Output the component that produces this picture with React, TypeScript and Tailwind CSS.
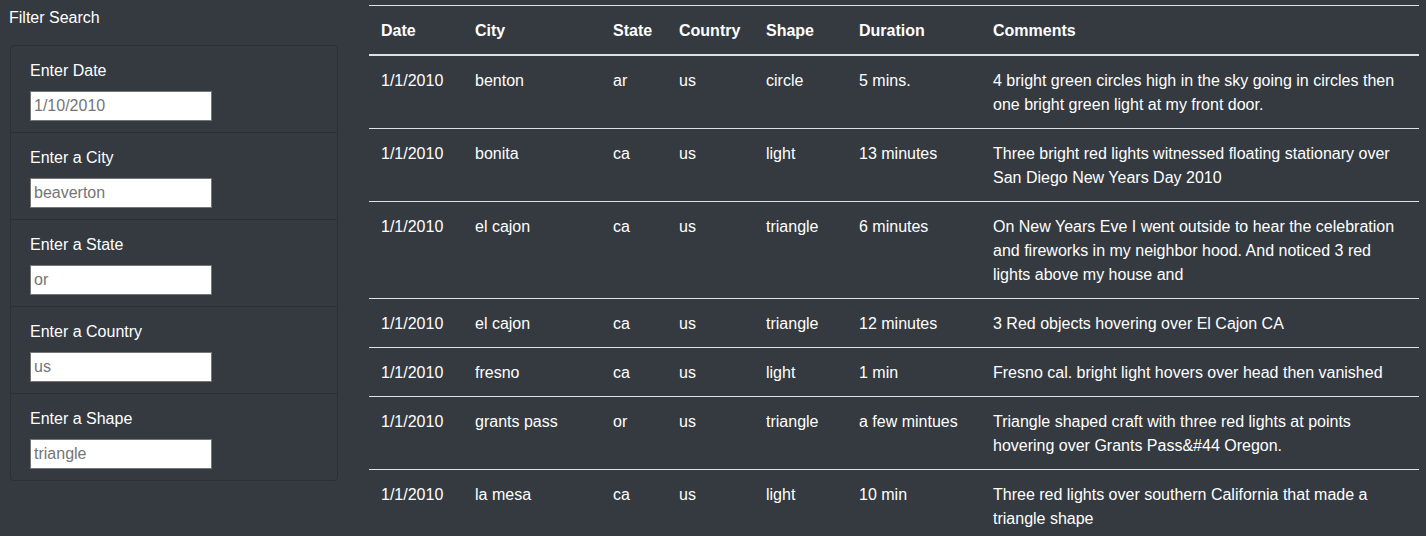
import React from 'react';

const filters = [
  { label: 'Enter Date', placeholder: '1/10/2010' },
  { label: 'Enter a City', placeholder: 'beaverton' },
  { label: 'Enter a State', placeholder: 'or' },
  { label: 'Enter a Country', placeholder: 'us' },
  { label: 'Enter a Shape', placeholder: 'triangle' },
];

const sightings = [
  { date: '1/1/2010', city: 'benton', state: 'ar', country: 'us', shape: 'circle', duration: '5 mins.', comments: '4 bright green circles high in the sky going in circles then one bright green light at my front door.' },
  { date: '1/1/2010', city: 'bonita', state: 'ca', country: 'us', shape: 'light', duration: '13 minutes', comments: 'Three bright red lights witnessed floating stationary over San Diego New Years Day 2010' },
  { date: '1/1/2010', city: 'el cajon', state: 'ca', country: 'us', shape: 'triangle', duration: '6 minutes', comments: 'On New Years Eve I went outside to hear the celebration and fireworks in my neighbor hood. And noticed 3 red lights above my house and' },
  { date: '1/1/2010', city: 'el cajon', state: 'ca', country: 'us', shape: 'triangle', duration: '12 minutes', comments: '3 Red objects hovering over El Cajon CA' },
  { date: '1/1/2010', city: 'fresno', state: 'ca', country: 'us', shape: 'light', duration: '1 min', comments: 'Fresno cal. bright light hovers over head then vanished' },
  { date: '1/1/2010', city: 'grants pass', state: 'or', country: 'us', shape: 'triangle', duration: 'a few mintues', comments: 'Triangle shaped craft with three red lights at points hovering over Grants Pass&#44 Oregon.' },
  { date: '1/1/2010', city: 'la mesa', state: 'ca', country: 'us', shape: 'light', duration: '10 min', comments: 'Three red lights over southern California that made a triangle shape' },
];

export default function App() {
  return (
    <div className="min-h-screen bg-[#343a40] text-white text-base leading-6 font-['Liberation_Sans',Arial,sans-serif] flex items-start">
      {/* sidebar */}
      <div className="w-[338px] shrink-0 pl-[9px] pt-[6px]">
        <h5 className="leading-6">Filter Search</h5>
        <ul className="mt-[15px] ml-px w-[328px] border border-[#2b3035] rounded-[4px]">
          {filters.map((f, i) => (
            <li key={f.label} className={`pl-[19px] pr-5 pt-[13px] pb-[11px] ${i > 0 ? 'border-t border-[#2b3035]' : ''}`}>
              <label className="block mb-[8px]">{f.label}</label>
              <input
                type="text"
                placeholder={f.placeholder}
                className="block w-[182px] h-[30px] bg-white border border-[#767676] px-[3px] text-base text-black placeholder:text-[#757575] outline-none"
              />
            </li>
          ))}
        </ul>
      </div>

      {/* results table */}
      <div className="ml-[31px] mt-[5px] w-[1050px] shrink-0">
        <table className="w-full table-fixed border-collapse text-left">
          <colgroup>
            <col className="w-[94px]" />
            <col className="w-[138px]" />
            <col className="w-[66px]" />
            <col className="w-[87px]" />
            <col className="w-[93px]" />
            <col className="w-[134px]" />
            <col />
          </colgroup>
          <thead>
            <tr className="border-t border-[#dee2e6]">
              {['Date', 'City', 'State', 'Country', 'Shape', 'Duration', 'Comments'].map(h => (
                <th key={h} className="px-3 pt-[13px] pb-[11px] font-bold align-bottom border-b-2 border-[#dee2e6]">{h}</th>
              ))}
            </tr>
          </thead>
          <tbody>
            {sightings.map((s, i) => (
              <tr key={i} className="border-t border-[#dee2e6] first:border-t-0">
                <td className="px-3 pt-[13px] pb-[11px] align-top">{s.date}</td>
                <td className="px-3 pt-[13px] pb-[11px] align-top">{s.city}</td>
                <td className="px-3 pt-[13px] pb-[11px] align-top">{s.state}</td>
                <td className="px-3 pt-[13px] pb-[11px] align-top">{s.country}</td>
                <td className="px-3 pt-[13px] pb-[11px] align-top">{s.shape}</td>
                <td className="px-3 pt-[13px] pb-[11px] align-top">{s.duration}</td>
                <td className="px-3 pt-[13px] pb-[11px] align-top">{s.comments}</td>
              </tr>
            ))}
          </tbody>
        </table>
      </div>
    </div>
  );
}
